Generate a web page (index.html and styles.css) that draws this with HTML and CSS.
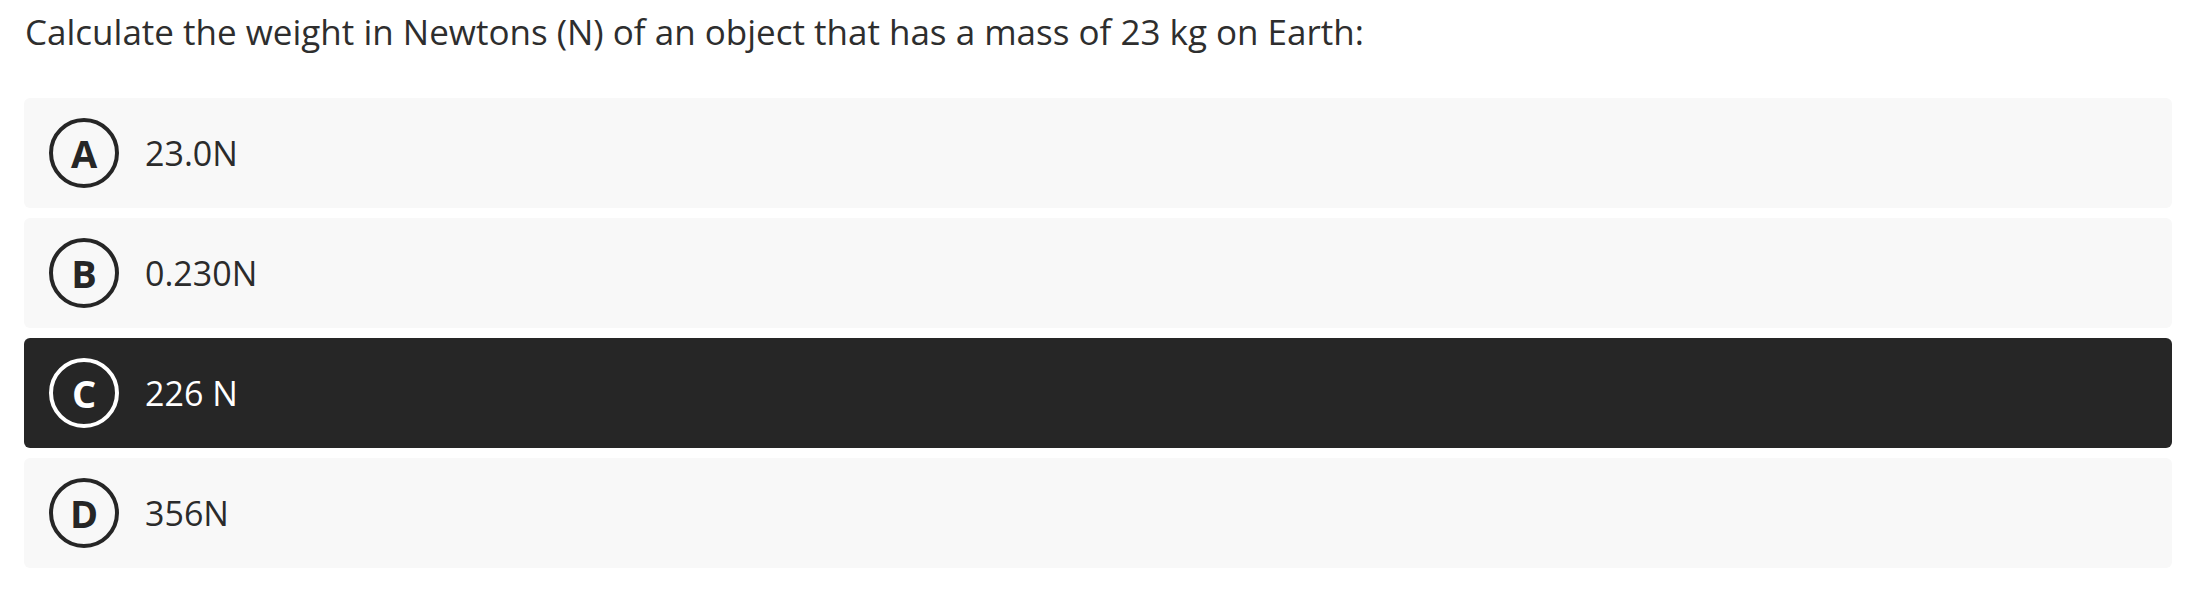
FILE: index.html
```html
<!DOCTYPE html>
<html lang="en">
<head>
<meta charset="utf-8">
<title>Question</title>
<link rel="stylesheet" href="styles.css">
</head>
<body>
<div class="quiz">
  <p class="question">Calculate the weight in Newtons (N) of an object that has a mass of 23 kg on Earth:</p>
  <ul class="options">
    <li class="option"><span class="badge">A</span><span class="label">23.0N</span></li>
    <li class="option"><span class="badge">B</span><span class="label">0.230N</span></li>
    <li class="option selected"><span class="badge">C</span><span class="label">226 N</span></li>
    <li class="option"><span class="badge">D</span><span class="label">356N</span></li>
  </ul>
</div>
</body>
</html>
```

FILE: styles.css
```css
html, body {
  margin: 0;
  padding: 0;
  background: #ffffff;
}

body {
  font-family: "Open Sans", "Liberation Sans", sans-serif;
  color: #2b2b2b;
}

.quiz {
  padding: 8px 16px 0 24px;
}

.question {
  margin: 0 0 42px 1px;
  font-size: 35px;
  line-height: 48px;
  color: #2e2e2e;
}

.options {
  list-style: none;
  margin: 0;
  padding: 0;
  display: flex;
  flex-direction: column;
  gap: 10px;
}

.option {
  display: flex;
  align-items: center;
  height: 110px;
  padding: 0 25px;
  box-sizing: border-box;
  background: #f8f8f8;
  border-radius: 6px;
  gap: 26px;
}

.badge {
  flex: 0 0 auto;
  width: 70px;
  height: 70px;
  box-sizing: border-box;
  border: 4px solid #262626;
  border-radius: 50%;
  display: flex;
  align-items: center;
  justify-content: center;
  font-weight: 700;
  font-size: 38px;
  line-height: 1;
  color: #262626;
}

.label {
  font-size: 34px;
  line-height: 1;
  color: #2b2b2b;
}

.option.selected {
  background: #262626;
}

.option.selected .badge {
  border-color: #ffffff;
  color: #ffffff;
}

.option.selected .label {
  color: #ffffff;
}
```
